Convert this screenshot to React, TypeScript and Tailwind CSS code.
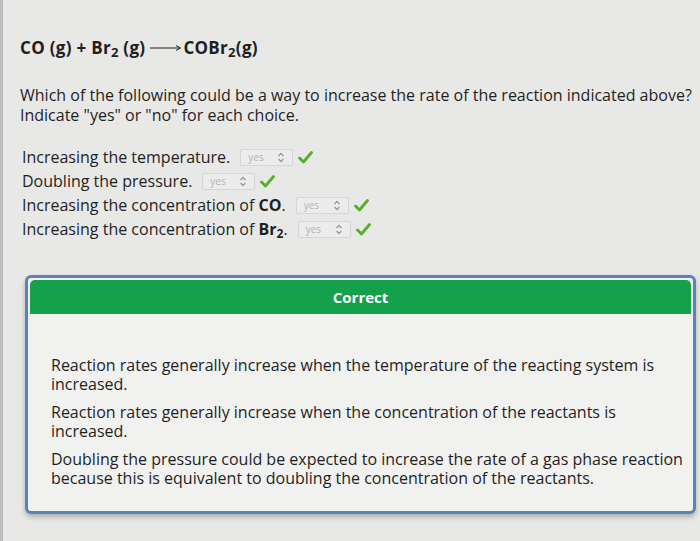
import React from "react";

function Select() {
  return (
    <span className="inline-flex items-center justify-between w-[53px] h-[17px] border border-[#d6d6d6] bg-[#ececec] rounded-[2px] px-[7px] ml-[10px] align-middle">
      <span className="text-[10px] leading-none text-[#b4b4b4]">yes</span>
      <svg width="8" height="11" viewBox="0 0 8 11" fill="none" stroke="#9a9a9a" strokeWidth="1.3">
        <path d="M1.5 4 L4 1.5 L6.5 4" />
        <path d="M1.5 7 L4 9.5 L6.5 7" />
      </svg>
    </span>
  );
}

function Check() {
  return (
    <svg width="15" height="13" viewBox="0 0 15 13" className="ml-[5px] inline-block align-middle">
      <path d="M1.5 7 L5.5 11 L13.5 1.5" fill="none" stroke="#57ad2e" strokeWidth="2.8" strokeLinecap="round" strokeLinejoin="round" />
    </svg>
  );
}

function Arrow() {
  return (
    <svg width="32" height="10" viewBox="0 0 32 10" className="inline-block ml-[5px] mr-[1px]">
      <path d="M0 5 H30" stroke="#222" strokeWidth="1" />
      <path d="M26 2.5 L30.5 5 L26 7.5" fill="none" stroke="#222" strokeWidth="1" />
    </svg>
  );
}

export default function App() {
  return (
    <div
      className="w-[700px] h-[541px] bg-[#e8e8e7] border-l-[3px] border-[#bdbdbd] pl-[17px] pt-[37px] text-[#1f1f1f] overflow-hidden"
      style={{ fontFamily: '"Open Sans", "DejaVu Sans", sans-serif' }}
    >
      <div className="text-[17px] font-bold leading-[22px] tracking-[0.3px] flex items-center">
        <span className="whitespace-pre">CO (g) + Br<sub className="text-[13px]">2</sub> (g)</span>
        <Arrow />
        <span>
          COBr<sub className="text-[13px]">2</sub>(g)
        </span>
      </div>

      <div className="mt-[26px] text-[16px] leading-[20px] whitespace-nowrap">
        <p>Which of the following could be a way to increase the rate of the reaction indicated above?</p>
        <p>Indicate "yes" or "no" for each choice.</p>
      </div>

      <div className="mt-[20px] pl-[2px] text-[16px] leading-[24px]">
        <div className="flex items-center">
          <span>Increasing the temperature.</span>
          <Select />
          <Check />
        </div>
        <div className="flex items-center">
          <span>Doubling the pressure.</span>
          <Select />
          <Check />
        </div>
        <div className="flex items-center">
          <span>
            Increasing the concentration of <b>CO</b>.
          </span>
          <Select />
          <Check />
        </div>
        <div className="flex items-center">
          <span>
            Increasing the concentration of <b>Br<sub className="text-[12px]">2</sub></b>.
          </span>
          <Select />
          <Check />
        </div>
      </div>

      <div className="mt-[34px] ml-[5px] w-[671px] h-[239px] border-[3px] border-[#5b83bb] rounded-[6px] bg-[#f1f1f0] p-[2px] shadow-[0_3px_5px_rgba(0,0,0,0.25)]">
        <div className="h-[34px] rounded-t-[5px] bg-[#15a04a] flex items-center justify-center text-white font-bold text-[15px]">
          Correct
        </div>
        <div className="pl-[21px] pr-[8px] pt-[42px] text-[16px] leading-[19px]">
          <p>Reaction rates generally increase when the temperature of the reacting system is increased.</p>
          <p className="mt-[9px] pr-[40px]">Reaction rates generally increase when the concentration of the reactants is increased.</p>
          <p className="mt-[9px]">Doubling the pressure could be expected to increase the rate of a gas phase reaction because this is equivalent to doubling the concentration of the reactants.</p>
        </div>
      </div>
    </div>
  );
}
